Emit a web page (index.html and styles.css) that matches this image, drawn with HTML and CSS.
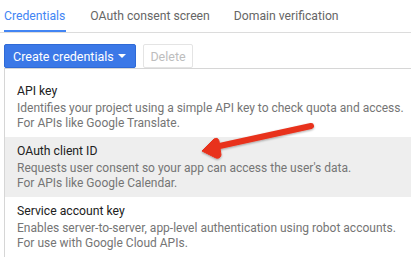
FILE: index.html
```html
<!DOCTYPE html>
<html lang="en">
<head>
    <meta charset="UTF-8">
    <title>Credentials</title>
    <link rel="stylesheet" href="styles.css">
</head>
<body>
    <div class="tabs">
        <div class="tab active">Credentials</div>
        <div class="tab">OAuth consent screen</div>
        <div class="tab">Domain verification</div>
    </div>

    <div class="toolbar">
        <div class="btn-create">Create credentials <span class="caret"></span></div>
        <div class="btn-delete">Delete</div>
    </div>

    <div class="menu">
        <div class="menu-item">
            <div class="item-title">API key</div>
            <div class="item-desc">Identifies your project using a simple API key to check quota and access.</div>
            <div class="item-desc">For APIs like Google Translate.</div>
        </div>
        <div class="menu-item hover">
            <div class="item-title">OAuth client ID</div>
            <div class="item-desc">Requests user consent so your app can access the user's data.</div>
            <div class="item-desc">For APIs like Google Calendar.</div>
        </div>
        <div class="menu-item">
            <div class="item-title">Service account key</div>
            <div class="item-desc">Enables server-to-server, app-level authentication using robot accounts.</div>
            <div class="item-desc">For use with Google Cloud APIs.</div>
        </div>
    </div>

    <!-- annotation arrow -->
    <svg class="arrow" width="411" height="259" viewBox="0 0 411 259">
        <defs>
            <filter id="shade" x="-20%" y="-50%" width="140%" height="200%">
                <feDropShadow dx="0" dy="1" stdDeviation="1.2" flood-color="#000" flood-opacity="0.35"/>
            </filter>
        </defs>
        <g filter="url(#shade)">
            <line x1="311" y1="126" x2="215" y2="147" stroke="#e8321c" stroke-width="6" stroke-linecap="round"/>
            <path d="M202 151 L214 139 Q218 137 219 141 L221 155 Q220 159 216 158 Z" fill="#e8321c" stroke="#e8321c" stroke-width="1" stroke-linejoin="round"/>
        </g>
    </svg>
</body>
</html>
```

FILE: styles.css
```css
* {
    margin: 0;
    padding: 0;
    box-sizing: border-box;
}

html, body {
    width: 100%;
    height: 100%;
    overflow: hidden;
}

body {
    position: relative;
    background-color: #fff;
    font-family: Roboto, 'Liberation Sans', sans-serif;
    color: #212121;
}

.tabs {
    display: flex;
    gap: 24px;
    padding-left: 4px;
    border-bottom: 1px solid #dcdcdc;
    height: 33px;
}

.tab {
    font-size: 12.2px;
    color: #666;
    padding-top: 9px;
    height: 32px;
}

.tab.active {
    color: #4285f4;
    border-bottom: 2px solid #4285f4;
    padding-right: 1px;
}

.toolbar {
    display: flex;
    align-items: flex-start;
    gap: 7px;
    padding: 11px 0 0 4px;
}

.btn-create {
    display: flex;
    align-items: center;
    height: 24px;
    width: 132px;
    padding: 0 9px 0 8px;
    background-color: #3b78e7;
    border: 1px solid #2f6ad6;
    border-radius: 2px;
    color: #fff;
    font-size: 12.5px;
}

.caret {
    margin-left: auto;
    width: 0;
    height: 0;
    border-left: 4.5px solid transparent;
    border-right: 4.5px solid transparent;
    border-top: 4.5px solid #fff;
}

.btn-delete {
    display: flex;
    align-items: center;
    justify-content: center;
    height: 24px;
    width: 50px;
    border: 1px solid #e4e4e4;
    border-radius: 2px;
    color: #bdbdbd;
    font-size: 12.5px;
}

.menu {
    margin-left: 4px;
    border-left: 1px solid #d6d6d6;
    border-top: 1px solid #d6d6d6;
    padding-top: 8px;
}

.menu-item {
    padding: 6px 0 6px 12px;
}

.menu-item.hover {
    background-color: #eeeeee;
}

.item-title {
    font-size: 12.2px;
    line-height: 17px;
    margin-bottom: 1px;
    color: #212121;
}

.item-desc {
    font-size: 12px;
    line-height: 15px;
    color: #757575;
    white-space: nowrap;
}

.arrow {
    position: absolute;
    top: 0;
    left: 0;
    pointer-events: none;
}
```
